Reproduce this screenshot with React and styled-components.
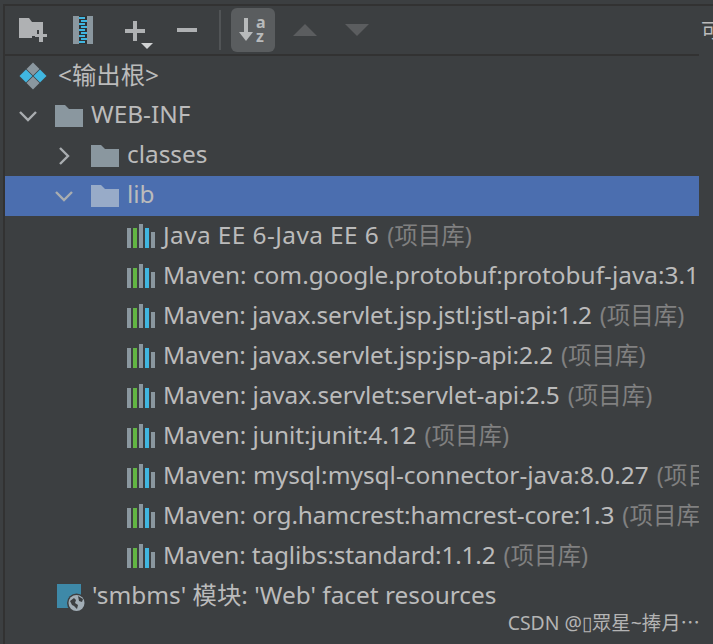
import React from "react";
import styled, { createGlobalStyle } from "styled-components";

const Global = createGlobalStyle`
  html, body { margin: 0; padding: 0; background: #3c3f41; }
  body { font-family: "Noto Sans", "Noto Sans CJK SC", sans-serif; }
`;

const Frame = styled.div`
  position: relative;
  width: 713px;
  height: 644px;
  overflow: hidden;
  background: #3c3f41;
  display: grid;
  grid-template-columns: 699px 14px;
  padding-top: 4px;
  box-sizing: border-box;
`;
const Panel = styled.div`
  border-top: 2px solid #323232;
  border-left: 2px solid #323232;
  margin-left: 3px;
  display: flex;
  flex-direction: column;
  min-width: 0;
  overflow: hidden;
`;
const SideColumn = styled.div`
  border-top: 2px solid #323232;
  color: #bbb;
  font: 20px "Noto Sans CJK SC", sans-serif;
  line-height: 48px;
  white-space: nowrap;
  overflow: hidden;
  padding-left: 2px;
`;
const Toolbar = styled.div`
  height: 48px;
  border-bottom: 2px solid #323232;
  display: flex;
  align-items: center;
  flex: none;
  padding-left: 3px;
`;
const ToolButton = styled.div`
  width: ${p => p.$w || 44}px;
  height: 44px;
  flex: none;
  border-radius: 6px;
  display: flex;
  align-items: center;
  justify-content: center;
  background: ${p => (p.$active ? "#5a5d5f" : "transparent")};
`;
const Separator = styled.div`
  width: 2px;
  height: 40px;
  background: #515456;
  margin: 0 10px 0 7px;
  flex: none;
`;
const Tree = styled.div`
  display: flex;
  flex-direction: column;
  overflow: hidden;
`;
const Row = styled.div`
  height: 40px;
  flex: none;
  display: flex;
  align-items: center;
  padding-left: ${p => p.$indent}px;
  background: ${p => (p.$selected ? "#4b6eaf" : "transparent")};
  white-space: nowrap;
`;
const ArrowSlot = styled.span`
  width: 36px;
  flex: none;
  display: flex;
  align-items: center;
`;
const IconSlot = styled.span`
  width: ${p => p.$w || 36}px;
  flex: none;
  display: flex;
  align-items: center;
`;
const Label = styled.span`
  color: #bbbbbb;
  font-size: 24.4px;
  font-family: "Noto Sans", "Noto Sans CJK SC", sans-serif;
  letter-spacing: ${p => p.$track || 0}px;
  margin-bottom: 5px;
`;
const Hint = styled.span`
  color: #808080;
  font-size: 23.5px;
  letter-spacing: 0;
  margin-left: 8px;
`;
const Watermark = styled.div`
  position: absolute;
  right: 13px;
  bottom: 8px;
  color: #b4b4b4;
  font: 19.4px "Noto Sans", "Noto Sans CJK SC", sans-serif;
  white-space: nowrap;
`;

const FolderIcon = ({ color = "#8a979f" }) => (
  <svg width="28" height="22" viewBox="0 0 28 22"><path d="M0 0h10l4 4h14v18H0z" fill={color} /></svg>
);
const Chevron = ({ open }) => (
  <svg width="18" height="18" viewBox="0 0 18 18" fill="none" stroke="#a9adb0" strokeWidth="2.4">
    {open ? <path d="M1 5l8 8 8-8" /> : <path d="M5 1l8 8-8 8" />}
  </svg>
);
const LibIcon = () => (
  <svg width="28" height="24" viewBox="0 0 28 24">
    <rect x="0" y="4" width="4" height="20" fill="#8a979f" />
    <rect x="6" y="4" width="4" height="20" fill="#62b543" />
    <rect x="12" y="0" width="4" height="24" fill="#8a979f" />
    <rect x="18" y="4" width="4" height="20" fill="#40b6e0" />
    <rect x="24" y="8" width="4" height="16" fill="#8a979f" />
  </svg>
);
const RootIcon = () => (
  <svg width="28" height="28" viewBox="0 0 28 28">
    <path d="M14 0.500l6.500 6.500-6.500 6.500-6.500-6.500z" fill="#8a979f" />
    <path d="M7 7.500l6.500 6.500-6.500 6.500-6.500-6.500z" fill="#40b6e0" />
    <path d="M21 7.500l6.500 6.500-6.500 6.500-6.500-6.500z" fill="#40b6e0" />
    <path d="M14 14.500l6.500 6.500-6.500 6.500-6.500-6.500z" fill="#8a979f" />
  </svg>
);
const WebIcon = () => (
  <svg width="30" height="30" viewBox="0 0 30 30">
    <rect x="0" y="3" width="24" height="24" fill="#3e89a8" />
    <circle cx="19.500" cy="22" r="9.500" fill="#3c3f41" />
    <circle cx="19.500" cy="22" r="8" fill="#a2aeb6" />
    <path d="M13 20l4-3 2 2-1 3 3 2-1 4-3-3-2-1zM21 15l5 3-1 3-3-1z" fill="#3c3f41" />
  </svg>
);
const NewFolder = () => (
  <svg width="28" height="24" viewBox="0 0 28 24">
    <path d="M0 0h10l3 4h11v8h-6v6h-5v2H0z" fill="#afb1b3" />
    <path d="M20 12h4v4h4v3h-4v5h-4v-5h-4v-3h4z" fill="#afb1b3" />
  </svg>
);
const Archive = () => (
  <svg width="20" height="28" viewBox="0 0 20 28">
    <rect x="0" y="0" width="6" height="28" fill="#8a979f" />
    <rect x="14" y="0" width="6" height="28" fill="#8a979f" />
    <rect x="6" y="0" width="8" height="28" fill="#2f3234" />
    <path d="M6 2h6M8 5h6M6 8h6M8 11h6M6 14h6M8 17h6M6 20h6M8 23h6M6 26h6" stroke="#40b6e0" strokeWidth="2" />
  </svg>
);
const Plus = () => (
  <svg width="36" height="38" viewBox="0 0 36 38">
    <path d="M16 10h4v8h8v4h-8v8h-4v-8H8v-4h8z" fill="#afb1b3" />
    <path d="M24 32h12l-6 6z" fill="#d0d2d3" />
  </svg>
);
const Minus = () => (
  <svg width="20" height="4" viewBox="0 0 20 4"><rect width="20" height="4" fill="#afb1b3" /></svg>
);
const Triangle = ({ down }) => (
  <svg width="24" height="12" viewBox="0 0 24 12">
    <path d={down ? "M0 0h24L12 12z" : "M12 0l12 12H0z"} fill="#5b5d5f" />
  </svg>
);
const Sort = () => (
  <svg width="28" height="26" viewBox="0 0 28 26">
    <path d="M5 1h4v17H5z" fill="#b8babb" />
    <path d="M0 15h14l-7 9z" fill="#b8babb" />
    <text x="17" y="11" fontFamily="Noto Sans" fontWeight="700" fontSize="16" fill="#b8babb">a</text>
    <text x="17" y="25" fontFamily="Noto Sans" fontWeight="700" fontSize="16" fill="#b8babb">z</text>
  </svg>
);

const libs = [
  { name: "Java EE 6-Java EE 6", track: 0.42 },
  { name: "Maven: com.google.protobuf:protobuf-java:3.1", track: 0 },
  { name: "Maven: javax.servlet.jsp.jstl:jstl-api:1.2", track: -0.14 },
  { name: "Maven: javax.servlet.jsp:jsp-api:2.2", track: -0.14 },
  { name: "Maven: javax.servlet:servlet-api:2.5", track: -0.07 },
  { name: "Maven: junit:junit:4.12", track: -0.04 },
  { name: "Maven: mysql:mysql-connector-java:8.0.27", track: 0 },
  { name: "Maven: org.hamcrest:hamcrest-core:1.3", track: -0.11 },
  { name: "Maven: taglibs:standard:1.1.2", track: -0.16 },
];

export default function App() {
  return (
    <Frame>
      <Global />
      <Panel>
        <Toolbar>
          <ToolButton $w={50}><NewFolder /></ToolButton>
          <ToolButton $w={50}><Archive /></ToolButton>
          <ToolButton $w={54}><Plus /></ToolButton>
          <ToolButton $w={50}><Minus /></ToolButton>
          <Separator />
          <ToolButton $active><Sort /></ToolButton>
          <ToolButton $w={60}><Triangle /></ToolButton>
          <ToolButton $w={44}><Triangle down /></ToolButton>
        </Toolbar>
        <Tree>
          <Row $indent={14}><IconSlot $w={39}><RootIcon /></IconSlot><Label>&lt;输出根&gt;</Label></Row>
          <Row $indent={14}><ArrowSlot><Chevron open /></ArrowSlot><IconSlot><FolderIcon /></IconSlot><Label>WEB-INF</Label></Row>
          <Row $indent={50}><ArrowSlot><Chevron /></ArrowSlot><IconSlot><FolderIcon /></IconSlot><Label>classes</Label></Row>
          <Row $indent={50} $selected><ArrowSlot><Chevron open /></ArrowSlot><IconSlot><FolderIcon color="#98abc8" /></IconSlot><Label>lib</Label></Row>
          {libs.map(({ name, track }) => (
            <Row $indent={122} key={name}>
              <IconSlot><LibIcon /></IconSlot>
              <Label $track={track}>{name}<Hint>(项目库)</Hint></Label>
            </Row>
          ))}
          <Row $indent={52}><IconSlot $w={35}><WebIcon /></IconSlot><Label>'smbms' 模块: 'Web' facet resources</Label></Row>
        </Tree>
      </Panel>
      <SideColumn>可</SideColumn>
      <Watermark>CSDN @▯眾星~捧月⋯</Watermark>
    </Frame>
  );
}
